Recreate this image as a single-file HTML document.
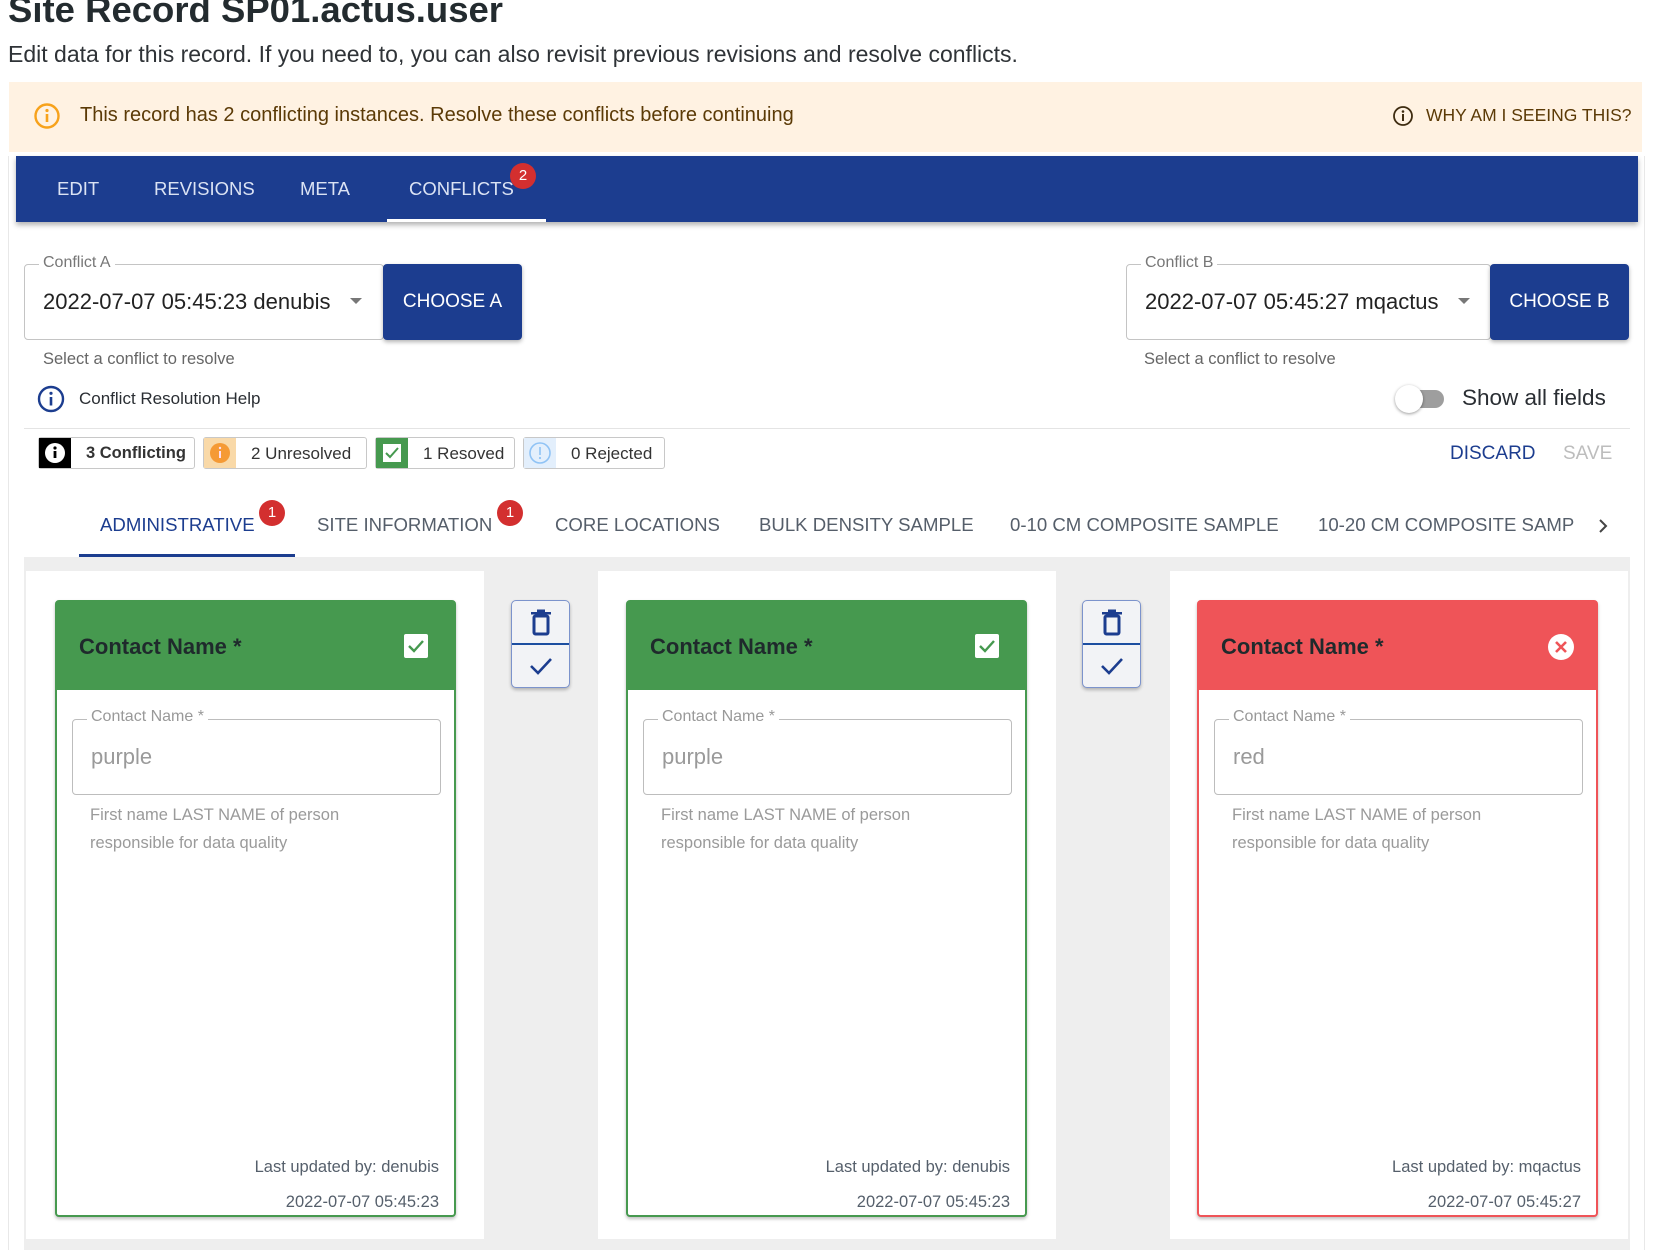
<!DOCTYPE html>
<html><head><meta charset="utf-8"><style>
*{box-sizing:border-box;margin:0;padding:0}
body{width:1657px;height:1250px;overflow:hidden;background:#fff;font-family:"Liberation Sans",sans-serif;position:relative;color:#333}
.a{position:absolute;white-space:nowrap}
.tab{position:absolute;top:178px;font-size:18.5px;color:#dbe3f4}
.stab{position:absolute;top:514px;font-size:18.6px;color:#555e6a}
.badge{position:absolute;width:26px;height:26px;border-radius:50%;background:#d32f2f;color:#fff;font-size:15px;text-align:center;line-height:26px}
.fld{position:absolute;border:1px solid #c4c4c4;border-radius:4px}
.lbl{position:absolute;top:-11px;left:14px;background:#fff;padding:0 4px;font-size:16px;color:#777}
.btn{position:absolute;background:#1c3d8f;color:#fff;font-size:19px;text-align:center;border-radius:4px;box-shadow:0 2px 4px rgba(0,0,0,.3)}
.chip{position:absolute;top:437px;height:32px;border:1px solid #c8c8c8;border-radius:3px;background:#fff;font-size:17px;color:#333}
.chip .ic{position:absolute;left:0;top:0;width:32px;height:30px}
.chip span{position:absolute;top:6px}
.panel{position:absolute;top:571px;width:458px;height:668px;background:#fff}
.card{position:absolute;top:600px;width:401px;height:617px;border:2px solid;border-radius:4px;background:#fff;box-shadow:0 2px 3px rgba(0,0,0,.25)}
.card .hd{position:absolute;left:0;right:0;top:0;height:88px}
.card .ht{position:absolute;left:22px;top:32px;font-size:22px;font-weight:bold;color:#1f2a2c}
.card .in{position:absolute;left:15px;top:117px;width:369px;height:76px;border:1px solid #bdbdbd;border-radius:4px}
.card .in .lbl{color:#999;font-size:16px;top:-12px}
.card .in .v{position:absolute;left:18px;top:24px;font-size:22px;color:#9a9a9a}
.card .hp{position:absolute;left:33px;top:199px;font-size:16.5px;color:#9a9a9a;line-height:28px}
.card .lu{position:absolute;right:15px;top:548px;font-size:16.5px;color:#555f6b;text-align:right;line-height:35px}
.act{position:absolute;top:600px;width:59px;height:88px;border:1px solid #7c93cc;border-radius:5px;background:#f2f3f6;box-shadow:0 2px 3px rgba(0,0,0,.25)}
.act .sep{position:absolute;left:0;right:0;top:42px;border-top:2px solid #1c4ea0}
</style></head><body>
<div class="a" style="left:8px;top:-11px;font-size:36.5px;font-weight:bold;color:#232b2f">Site Record SP01.actus.user</div>
<div class="a" style="left:8px;top:41px;font-size:23px;color:#2f3337">Edit data for this record. If you need to, you can also revisit previous revisions and resolve conflicts.</div>
<div class="a" style="left:9px;top:82px;width:1633px;height:70px;background:#fff2e2"></div>
<svg class="a" style="left:33px;top:102px" width="28" height="28" viewBox="0 0 28 28"><circle cx="14" cy="14" r="11.5" fill="none" stroke="#f7a21b" stroke-width="2.4"/><rect x="12.7" y="12" width="2.6" height="8" fill="#f7a21b"/><circle cx="14" cy="8.5" r="1.6" fill="#f7a21b"/></svg>
<div class="a" style="left:80px;top:104px;font-size:20px;color:#5b3a06">This record has 2 conflicting instances. Resolve these conflicts before continuing</div>
<svg class="a" style="left:1392px;top:105px" width="22" height="22" viewBox="0 0 22 22"><circle cx="11" cy="11" r="9" fill="none" stroke="#3e2c10" stroke-width="1.8"/><rect x="10" y="9" width="2" height="7" fill="#3e2c10"/><circle cx="11" cy="6.5" r="1.3" fill="#3e2c10"/></svg>
<div class="a" style="left:1426px;top:105px;font-size:17.5px;color:#5b3a06">WHY AM I SEEING THIS?</div>
<div class="a" style="left:8px;top:156px;width:1637px;height:1094px;border-left:1px solid #e8e8e8;border-right:1px solid #e8e8e8"></div>
<div class="a" style="left:16px;top:156px;width:1622px;height:66px;background:#1c3d8f;box-shadow:0 3px 5px rgba(0,0,0,.3)"></div>
<div class="tab" style="left:57px">EDIT</div>
<div class="tab" style="left:154px">REVISIONS</div>
<div class="tab" style="left:300px">META</div>
<div class="tab" style="left:409px">CONFLICTS</div>
<div class="badge" style="left:510px;top:163px">2</div>
<div class="a" style="left:387px;top:219px;width:159px;height:3px;background:#fff"></div>

<div class="fld" style="left:24px;top:264px;width:360px;height:76px"><div class="lbl">Conflict A</div><div class="a" style="left:18px;top:24px;font-size:22px;color:#222">2022-07-07 05:45:23 denubis</div><div class="a" style="left:325px;top:33px;border:6px solid transparent;border-top:6px solid #777"></div></div>
<div class="btn" style="left:383px;top:264px;width:139px;height:76px;line-height:76px">CHOOSE A</div>
<div class="a" style="left:43px;top:350px;font-size:16.5px;color:#666">Select a conflict to resolve</div>
<div class="fld" style="left:1126px;top:264px;width:365px;height:76px"><div class="lbl">Conflict B</div><div class="a" style="left:18px;top:24px;font-size:22px;color:#222">2022-07-07 05:45:27 mqactus</div><div class="a" style="left:331px;top:33px;border:6px solid transparent;border-top:6px solid #777"></div></div>
<div class="btn" style="left:1490px;top:264px;width:139px;height:76px;line-height:76px">CHOOSE B</div>
<div class="a" style="left:1144px;top:350px;font-size:16.5px;color:#666">Select a conflict to resolve</div>
<svg class="a" style="left:37px;top:385px" width="28" height="28" viewBox="0 0 28 28"><circle cx="14" cy="14" r="12" fill="none" stroke="#1c3d8f" stroke-width="2.4"/><rect x="12.7" y="12" width="2.6" height="8.5" fill="#1c3d8f"/><circle cx="14" cy="8.3" r="1.6" fill="#1c3d8f"/></svg>
<div class="a" style="left:79px;top:389px;font-size:17px;color:#2a2e33">Conflict Resolution Help</div>
<div class="a" style="left:1402px;top:390px;width:42px;height:18px;border-radius:9px;background:#9e9e9e"></div>
<div class="a" style="left:1395px;top:385px;width:28px;height:28px;border-radius:50%;background:#fff;box-shadow:0 1px 3px rgba(0,0,0,.4)"></div>
<div class="a" style="left:1462px;top:385px;font-size:22.5px;color:#2a2e33">Show all fields</div>
<div class="a" style="left:24px;top:428px;width:1606px;height:1px;background:#e4e4e4"></div>

<div class="chip" style="left:38px;width:157px"><div class="ic" style="background:#000"><svg width="32" height="30"><circle cx="16" cy="15" r="10" fill="#fff"/><rect x="14.6" y="13" width="2.8" height="7" fill="#000"/><circle cx="16" cy="10" r="1.6" fill="#000"/></svg></div><span style="left:47px;font-weight:bold;font-size:16.5px">3 Conflicting</span></div>
<div class="chip" style="left:203px;width:164px"><div class="ic" style="background:#f9d9a8"><svg width="32" height="30"><circle cx="16" cy="15" r="10" fill="#f59a35"/><rect x="15" y="13" width="2" height="7" fill="#fde"/><circle cx="16" cy="10" r="1.2" fill="#fde"/></svg></div><span style="left:47px">2 Unresolved</span></div>
<div class="chip" style="left:375px;width:140px"><div class="ic" style="background:#46994f"><svg width="32" height="30"><rect x="7" y="6" width="18" height="18" fill="#fff"/><path d="M10 15l4 4 8-9" fill="none" stroke="#46994f" stroke-width="2"/></svg></div><span style="left:47px">1 Resoved</span></div>
<div class="chip" style="left:523px;width:142px"><div class="ic" style="background:#e3effc"><svg width="32" height="30"><circle cx="16" cy="15" r="10" fill="none" stroke="#90c3f5" stroke-width="1.6"/><rect x="15.2" y="9" width="1.6" height="8" fill="#90c3f5"/><circle cx="16" cy="20" r="1.1" fill="#90c3f5"/></svg></div><span style="left:47px">0 Rejected</span></div>
<div class="a" style="left:1450px;top:443px;font-size:19px;color:#1c3d8f">DISCARD</div>
<div class="a" style="left:1563px;top:443px;font-size:19px;color:#bdbdbd">SAVE</div>

<div class="stab" style="left:100px;color:#1c3d8f">ADMINISTRATIVE</div>
<div class="badge" style="left:259px;top:500px">1</div>
<div class="stab" style="left:317px">SITE INFORMATION</div>
<div class="badge" style="left:497px;top:500px">1</div>
<div class="stab" style="left:555px">CORE LOCATIONS</div>
<div class="stab" style="left:759px">BULK DENSITY SAMPLE</div>
<div class="stab" style="left:1010px">0-10 CM COMPOSITE SAMPLE</div>
<div class="a" style="left:1318px;top:514px;width:256px;overflow:hidden;font-size:18.6px;color:#555e6a">10-20 CM COMPOSITE SAMPLE</div>
<svg class="a" style="left:1596px;top:517px" width="14" height="18"><path d="M4 3l6 6-6 6" fill="none" stroke="#444" stroke-width="2"/></svg>
<div class="a" style="left:79px;top:554px;width:216px;height:3px;background:#1c3d8f"></div>

<div class="a" style="left:24px;top:557px;width:1606px;height:693px;background:#eeeeee"></div>
<div class="panel" style="left:26px"></div>
<div class="panel" style="left:598px"></div>
<div class="panel" style="left:1170px"></div>

<div class="card" style="left:55px;border-color:#46994f"><div class="hd" style="background:#46994f"></div><div class="ht">Contact Name *</div>
<svg class="a" style="left:347px;top:32px" width="24" height="24"><rect width="24" height="24" rx="2" fill="#fff"/><path d="M5 12l5 5 9-10" fill="none" stroke="#46994f" stroke-width="2.4"/></svg>
<div class="in"><div class="lbl">Contact Name *</div><div class="v">purple</div></div>
<div class="hp">First name LAST NAME of person<br>responsible for data quality</div>
<div class="lu">Last updated by: denubis<br>2022-07-07 05:45:23</div></div>

<div class="card" style="left:626px;border-color:#46994f"><div class="hd" style="background:#46994f"></div><div class="ht">Contact Name *</div>
<svg class="a" style="left:347px;top:32px" width="24" height="24"><rect width="24" height="24" rx="2" fill="#fff"/><path d="M5 12l5 5 9-10" fill="none" stroke="#46994f" stroke-width="2.4"/></svg>
<div class="in"><div class="lbl">Contact Name *</div><div class="v">purple</div></div>
<div class="hp">First name LAST NAME of person<br>responsible for data quality</div>
<div class="lu">Last updated by: denubis<br>2022-07-07 05:45:23</div></div>

<div class="card" style="left:1197px;border-color:#ef5458"><div class="hd" style="background:#ef5458"></div><div class="ht">Contact Name *</div>
<svg class="a" style="left:348px;top:31px" width="28" height="28"><circle cx="14" cy="14" r="13" fill="#fff"/><path d="M9 9l10 10M19 9l-10 10" stroke="#ef5458" stroke-width="2.6"/></svg>
<div class="in"><div class="lbl">Contact Name *</div><div class="v">red</div></div>
<div class="hp">First name LAST NAME of person<br>responsible for data quality</div>
<div class="lu">Last updated by: mqactus<br>2022-07-07 05:45:27</div></div>

<div class="act" style="left:511px"><svg class="a" style="left:17px;top:8px" width="24" height="28"><rect x="2" y="3" width="20" height="2.5" fill="#1c3d8f"/><rect x="8" y="0.5" width="8" height="3" fill="#1c3d8f"/><rect x="5" y="7" width="14" height="18" rx="1.5" fill="none" stroke="#1c3d8f" stroke-width="3"/></svg><div class="sep"></div><svg class="a" style="left:16px;top:54px" width="26" height="22"><path d="M3 11l7 7 13-14" fill="none" stroke="#1c3d8f" stroke-width="2.6"/></svg></div>
<div class="act" style="left:1082px"><svg class="a" style="left:17px;top:8px" width="24" height="28"><rect x="2" y="3" width="20" height="2.5" fill="#1c3d8f"/><rect x="8" y="0.5" width="8" height="3" fill="#1c3d8f"/><rect x="5" y="7" width="14" height="18" rx="1.5" fill="none" stroke="#1c3d8f" stroke-width="3"/></svg><div class="sep"></div><svg class="a" style="left:16px;top:54px" width="26" height="22"><path d="M3 11l7 7 13-14" fill="none" stroke="#1c3d8f" stroke-width="2.6"/></svg></div>
</body></html>
